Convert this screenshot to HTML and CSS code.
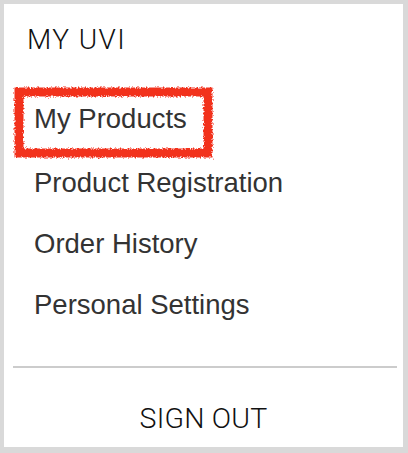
FILE: index.html
```html
<!DOCTYPE html>
<html>
<head>
<meta charset="utf-8">
<link rel="stylesheet" href="styles.css">
</head>
<body>
<div class="panel">
  <div class="title">MY UVI</div>
  <ul class="menu">
    <li class="item first">My Products</li>
    <li class="item">Product Registration</li>
    <li class="item">Order History</li>
    <li class="item">Personal Settings</li>
  </ul>
  <div class="divider"></div>
  <div class="signout">SIGN OUT</div>
  <svg class="highlight" width="210" height="82" viewBox="0 0 210 82">
    <defs>
      <filter id="rough" x="-10%" y="-10%" width="120%" height="120%">
        <feTurbulence type="fractalNoise" baseFrequency="0.6" numOctaves="3" seed="5"/>
        <feDisplacementMap in="SourceGraphic" scale="4.5"/>
      </filter>
    </defs>
    <rect x="9" y="9" width="189" height="61" fill="none" stroke="#f2311f" stroke-width="9" filter="url(#rough)"/>
  </svg>
</div>
</body>
</html>
```
FILE: styles.css
```css
html, body {
  margin: 0;
  padding: 0;
  background: #ffffff;
}
.panel {
  position: relative;
  box-sizing: border-box;
  width: 408px;
  height: 453px;
  border-style: solid;
  border-color: #d9d9d9;
  border-width: 4px 5px 6px 4px;
  background: #ffffff;
  padding-top: 22px;
}
.title {
  font-family: Roboto, "Liberation Sans", sans-serif;
  font-weight: 300;
  font-size: 28px;
  line-height: 28px;
  letter-spacing: 1.4px;
  color: #111111;
  padding-left: 23px;
}
.menu {
  list-style: none;
  margin: 34px 0 0 0;
  padding: 0 0 0 30px;
}
.item {
  font-family: "Liberation Sans", Arial, sans-serif;
  font-size: 27.5px;
  line-height: 61px;
  color: #333333;
}
.item.first {
  margin-bottom: 3px;
}
.divider {
  height: 2px;
  background: #cccccc;
  margin: 31px 6px 0 9px;
}
.signout {
  font-family: Roboto, "Liberation Sans", sans-serif;
  font-weight: 300;
  font-size: 28.5px;
  line-height: 28px;
  letter-spacing: 0.2px;
  color: #111111;
  text-align: center;
  margin-top: 37px;
}
.highlight {
  position: absolute;
  left: 6px;
  top: 79px;
}
```
